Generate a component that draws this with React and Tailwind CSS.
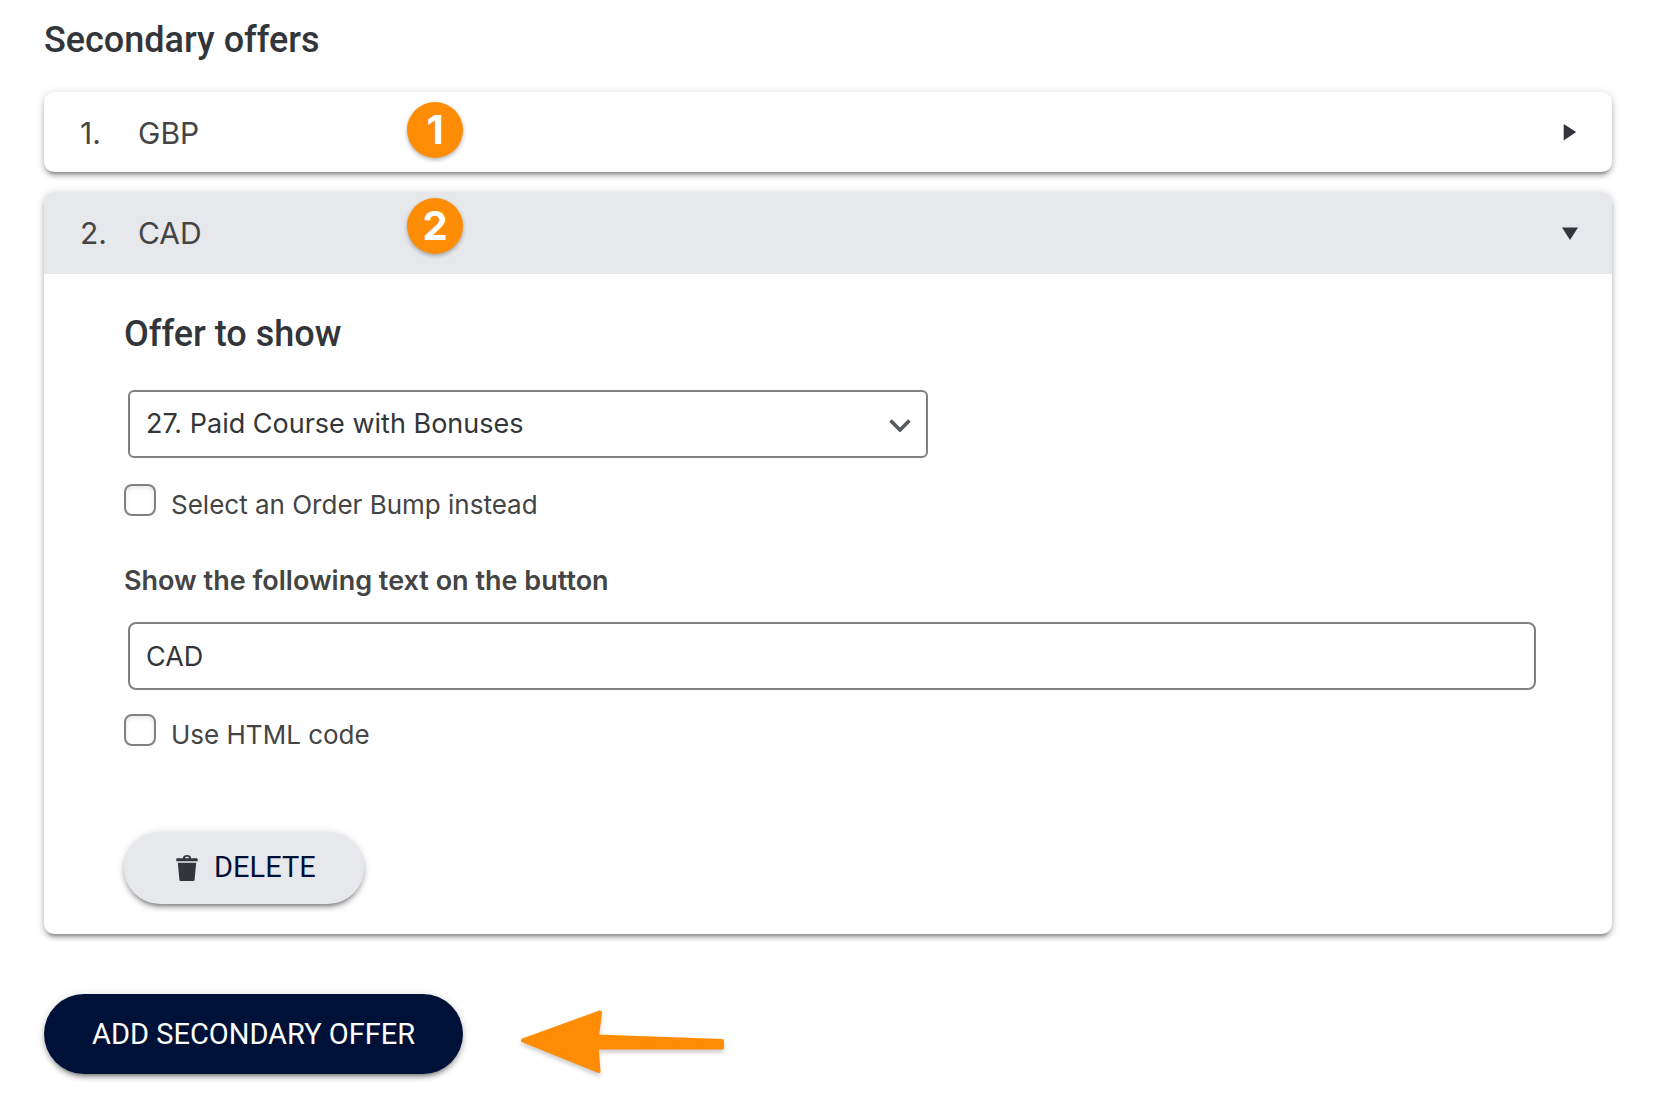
import React, { useState } from "react";

const sans = "font-[Inter,'Noto_Sans',sans-serif]";
const roboto = "font-[Roboto,'Open_Sans',sans-serif]";
const raised = "shadow-[0_4px_5px_rgba(0,0,0,0.2),0_6px_3px_-4px_rgba(0,0,0,0.24),0_1px_8px_rgba(0,0,0,0.16)]";

function Badge({ children, className }) {
  return (
    <span
      className={`pointer-events-none absolute flex size-14 items-center justify-center rounded-full bg-[#ff8c05] text-[40px] leading-none font-bold text-white shadow-[0_2px_4px_rgba(0,0,0,0.3)] ${className}`}
    >
      {children}
    </span>
  );
}

function OfferHeader({ number, name, open, className }) {
  return (
    <button
      type="button"
      aria-expanded={open}
      className={`flex w-full items-center px-9 text-left text-[30px] leading-10 text-[#444] ${className}`}
    >
      <span className="w-[58px]">{number}.</span>
      <span className="flex-1">{name}</span>
      <svg viewBox="0 0 16 16" className="-mr-0.5 size-4 overflow-visible fill-[#32353a]" aria-hidden="true">
        {open ? <path d="M0 2.500h16l-8 12.500z" /> : <path d="M1.700-1l12.500 8-12.500 8.500z" />}
      </svg>
    </button>
  );
}

function Check({ id, children, className }) {
  return (
    <div className={`flex items-start gap-[15px] ${className}`}>
      <input
        id={id}
        type="checkbox"
        className="size-8 shrink-0 appearance-none rounded-lg border-2 border-[#808080] bg-white shadow-[inset_0_2px_4px_rgba(0,0,0,0.1)] checked:bg-[#001137]"
      />
      <label htmlFor={id} className="mt-[5px] text-[26px] leading-8 text-[#444]">
        {children}
      </label>
    </div>
  );
}

export default function App() {
  const [text, setText] = useState("CAD");
  return (
    <main className={`min-h-screen bg-white pt-4 pr-15 pb-6 pl-11 ${sans}`}>
      <h1 className={`text-[36px] leading-12 font-medium text-[#32353a] ${roboto}`}>Secondary offers</h1>

      <section className={`relative mt-7 rounded-[10px] bg-white ${raised}`}>
        <OfferHeader number={1} name="GBP" open={false} className="h-20 rounded-[10px] pt-0.5" />
        <Badge className="top-2.5 left-[363px]">1</Badge>
      </section>

      <section className={`relative mt-5 rounded-[10px] bg-white ${raised}`}>
        <OfferHeader number={2} name="CAD" open className="h-[82px] rounded-t-[10px] bg-[#e7e8ec]" />
        <Badge className="top-1.5 left-[363px]">2</Badge>

        <div className="pt-9 pr-18 pb-[30px] pl-20">
          <h2 className={`text-[36px] leading-12 font-medium text-[#32353a] ${roboto}`}>
            <label htmlFor="offer">Offer to show</label>
          </h2>
          <div className="relative mx-1 mt-8 max-w-[800px]">
            <select
              id="offer"
              className="h-[68px] w-full appearance-none rounded-md border-2 border-[#808080] bg-white px-4 text-[27px] text-[#32353a]"
            >
              <option>27. Paid Course with Bonuses</option>
            </select>
            <svg
              viewBox="0 0 22 14"
              className="pointer-events-none absolute top-7 right-[17px] h-3.5 w-[22px] fill-none stroke-[#555961]"
              strokeWidth="3.6"
              aria-hidden="true"
            >
              <path d="M1.500 2.500L11 12l9.500-9.500" />
            </svg>
          </div>
          <Check id="bump" className="mt-[26px]">
            Select an Order Bump instead
          </Check>

          <label htmlFor="button-text" className="mt-11 block text-[27px] leading-8 font-semibold text-[#444]">
            Show the following text on the button
          </label>
          <div className="mx-1 mt-[25px]">
            <input
              id="button-text"
              type="text"
              value={text}
              onChange={(e) => setText(e.target.value)}
              className="block h-[68px] w-full rounded-lg border-2 border-[#808080] bg-white px-4 text-[27px] text-[#32353a]"
            />
          </div>
          <Check id="html" className="mt-6">
            Use HTML code
          </Check>

          <button
            type="button"
            className={`mt-[81px] flex h-18 items-center gap-4 rounded-full bg-[#e7e8ec] pr-12 pl-[52px] text-[29px] text-[#001137] ${raised} ${roboto}`}
          >
            <svg viewBox="0 0 22 26" className="h-[26px] w-[22px] fill-[#32353a]" aria-hidden="true">
              <path d="M7 3.200C7 1.200 8.500 0 11 0s4 1.200 4 3.200h5.500c.8 0 1.200.5 1.200 1.300v1.700H.3V4.500c0-.8.4-1.300 1.200-1.300zm2 0h4c0-.9-.8-1.400-2-1.400s-2 .5-2 1.400z" />
              <path d="M1.800 7.800h18.400l-1.600 17c-.1.800-.5 1.200-1.300 1.200H4.700c-.8 0-1.200-.4-1.300-1.200z" />
            </svg>
            DELETE
          </button>
        </div>
      </section>

      <div className="mt-15 flex items-center gap-[58px]">
        <button
          type="button"
          className={`h-20 rounded-full bg-[#001137] px-12 pt-0.5 text-[29px] text-white ${raised} ${roboto}`}
        >
          ADD SECONDARY OFFER
        </button>
        <svg
          viewBox="0 0 204 80"
          className="h-20 w-[204px] overflow-visible fill-[#ff8c05] stroke-[#ff8c05] drop-shadow-[0_3px_2px_rgba(0,0,0,0.2)]"
          strokeWidth="4"
          strokeLinejoin="round"
          aria-hidden="true"
        >
          <path d="M2 46.500L79 18.500 76 42.500 201 47v6.500H75.500L77.500 77z" />
        </svg>
      </div>
    </main>
  );
}
